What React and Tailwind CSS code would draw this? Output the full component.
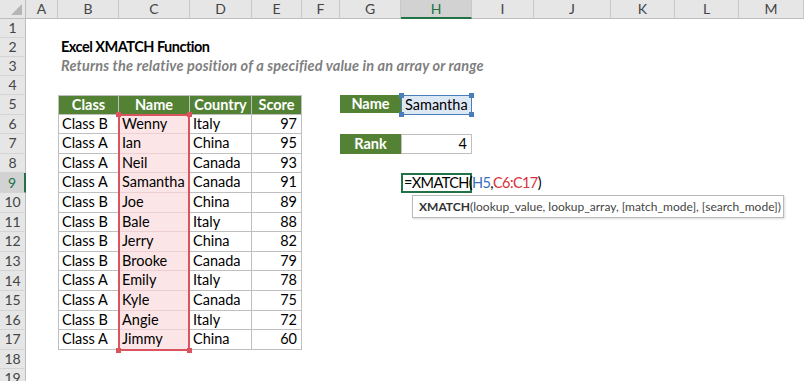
import React from 'react';

const FONT = { fontFamily: '"Lato", "Liberation Sans", sans-serif' };

const data = [
  ['Class B', 'Wenny', 'Italy', 97],
  ['Class A', 'Ian', 'China', 95],
  ['Class A', 'Neil', 'Canada', 93],
  ['Class A', 'Samantha', 'Canada', 91],
  ['Class B', 'Joe', 'China', 89],
  ['Class B', 'Bale', 'Italy', 88],
  ['Class B', 'Jerry', 'China', 82],
  ['Class B', 'Brooke', 'Canada', 79],
  ['Class A', 'Emily', 'Italy', 78],
  ['Class A', 'Kyle', 'Canada', 75],
  ['Class B', 'Angie', 'Italy', 72],
  ['Class A', 'Jimmy', 'China', 60],
];

const letters = ['A', 'B', 'C', 'D', 'E', 'F', 'G', 'H', 'I', 'J', 'K', 'L', 'M'];

const base = 'flex items-center whitespace-nowrap text-[14.5px] leading-none';

function Corner({ cls }) {
  return <span className={`absolute w-[5px] h-[5px] ${cls}`} />;
}

function cellFor(r, c) {
  const L = letters[c];
  if (r === 2 && L === 'B')
    return <div className={`${base} text-black pl-[3px] font-bold tracking-[-0.5px]`}>Excel XMATCH Function</div>;
  if (r === 3 && L === 'B')
    return <div className={`${base} pl-[3px] font-bold italic tracking-[0.15px] text-[#7f7f7f]`}>Returns the relative position of a specified value in an array or range</div>;
  if (r === 5 && c >= 1 && c <= 4) {
    const labels = ['Class', 'Name', 'Country', 'Score'];
    return (
      <div className={`${base} justify-center bg-[#548235] text-white font-bold border-t border-r border-b border-[#bfbfbf] ${c === 1 ? 'border-l' : ''}`}>
        {labels[c - 1]}
      </div>
    );
  }
  if (r >= 6 && r <= 17 && c >= 1 && c <= 4) {
    const row = data[r - 6];
    if (c === 1) return <div className={`${base} text-black pl-[3px] border-l border-r border-b border-[#bfbfbf]`}>{row[0]}</div>;
    if (c === 2) {
      if (r === 6)
        return (
          <div className={`${base} text-black relative pl-[3px] bg-[#fbe5e6] border-r border-b border-[#ecd0d1]`}>
            {row[1]}
            <div className="absolute -left-[1px] -top-[1px] w-[72px] h-[237px] border-2 border-[#d9545c] pointer-events-none">
              <Corner cls="-left-[4px] -top-[4px] bg-[#d9545c]" />
              <Corner cls="-right-[4px] -top-[4px] bg-[#d9545c]" />
              <Corner cls="-left-[4px] -bottom-[4px] bg-[#d9545c]" />
              <Corner cls="-right-[4px] -bottom-[4px] bg-[#d9545c]" />
            </div>
          </div>
        );
      return <div className={`${base} text-black pl-[3px] bg-[#fbe5e6] border-r border-b border-[#ecd0d1]`}>{row[1]}</div>;
    }
    if (c === 3) return <div className={`${base} text-black pl-[3px] border-r border-b border-[#bfbfbf]`}>{row[2]}</div>;
    return <div className={`${base} text-black justify-end pr-[4px] border-r border-b border-[#bfbfbf]`}>{row[3]}</div>;
  }
  if (r === 5 && L === 'G')
    return <div className={`${base} justify-center bg-[#548235] text-white font-bold border-b-2 border-white`}>Name</div>;
  if (r === 5 && L === 'H')
    return (
      <div className={`${base} text-black relative pl-[3px] bg-[#dde8f5] border border-[#4a7ebb]`}>
        Samantha
        <Corner cls="-left-[3px] -top-[3px] bg-[#4a7ebb]" />
        <Corner cls="-right-[3px] -top-[3px] bg-[#4a7ebb]" />
        <Corner cls="-left-[3px] -bottom-[3px] bg-[#4a7ebb]" />
        <Corner cls="-right-[3px] -bottom-[3px] bg-[#4a7ebb]" />
      </div>
    );
  if (r === 7 && L === 'G')
    return <div className={`${base} justify-center bg-[#548235] text-white font-bold`}>Rank</div>;
  if (r === 7 && L === 'H')
    return <div className={`${base} text-black justify-end pr-[4px] border border-[#bfbfbf]`}>4</div>;
  if (r === 9 && L === 'H')
    return (
      <div className={`${base} text-black relative pl-[1px] border-2 border-[#217346] tracking-[-0.6px]`}>
        <span>=XMATCH(</span>
        <span className="text-[#3a6fc4]">H5</span>
        <span>,</span>
        <span className="text-[#d8303a]">C6:C17</span>
        <span>)</span>
        <div className="absolute left-[9px] top-[20px] w-[372px] h-[23px] flex items-center pl-[6px] bg-white border border-[#b9b9b9] shadow-[1px_1px_2px_rgba(0,0,0,0.15)] text-[12px] tracking-normal leading-none text-[#444] whitespace-nowrap">
          <span className="font-bold text-[#333]">XMATCH</span>
          <span>(lookup_value, lookup_array, [match_mode], [search_mode])</span>
        </div>
      </div>
    );
  return <div />;
}

export default function App() {
  const cells = [];
  cells.push(
    <div key="corner" className="relative bg-[#e6e6e6] border-r border-b border-[#bdbdbd]">
      <svg className="absolute right-[3px] bottom-[3px]" width="11" height="11" viewBox="0 0 11 11">
        <polygon points="11,0 11,11 0,11" fill="#b5b5b5" />
      </svg>
    </div>
  );
  letters.forEach((l) => {
    const active = l === 'H';
    cells.push(
      <div
        key={`h-${l}`}
        className={`flex items-center justify-center text-[14px] leading-none border-r border-[#c9c9c9] ${
          active
            ? 'bg-[#d2d2d2] text-[#217346] border-b-2 border-b-[#217346]'
            : 'bg-[#e6e6e6] text-[#444] border-b border-b-[#bdbdbd]'
        }`}
      >
        {l}
      </div>
    );
  });
  for (let r = 1; r <= 19; r++) {
    const active = r === 9;
    cells.push(
      <div
        key={`r-${r}`}
        className={`flex items-center justify-center text-[14px] leading-none border-b border-b-[#d4d4d4] ${
          active
            ? 'bg-[#d2d2d2] text-[#217346] border-r-2 border-r-[#217346]'
            : 'bg-[#e6e6e6] text-[#444] border-r border-r-[#bdbdbd]'
        }`}
      >
        {r}
      </div>
    );
    for (let c = 0; c < 13; c++) {
      cells.push(<React.Fragment key={`c-${r}-${c}`}>{cellFor(r, c)}</React.Fragment>);
    }
  }

  return (
    <div className="w-[804px] h-[381px] overflow-hidden bg-white" style={FONT}>
      <div className="grid grid-cols-[26px_32px_61px_71px_62px_50px_38px_61px_71px_62px_77px_64px_64px_65px] grid-rows-[19px_repeat(4,19px)_repeat(13,19.6px)_19px_19px]">
        {cells}
      </div>
    </div>
  );
}
